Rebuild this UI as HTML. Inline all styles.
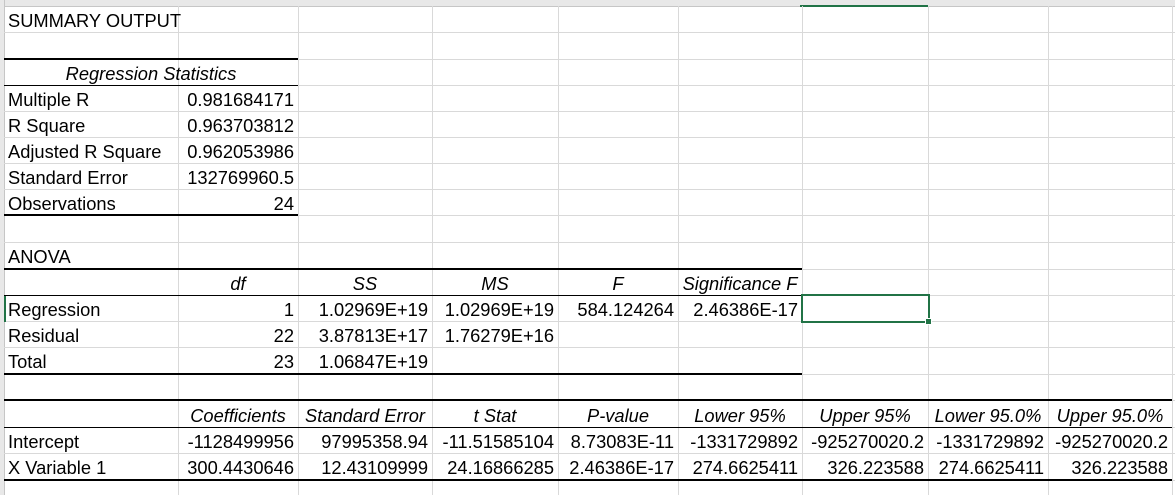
<!DOCTYPE html>
<html><head><meta charset="utf-8"><style>
body{margin:0;width:1175px;height:495px;overflow:hidden;background:#fff;font-family:"Liberation Sans",sans-serif;font-size:18.3px;color:#000;position:relative}
.vl{position:absolute;top:6px;bottom:0;width:1px;background:#d9d9d9}
.hl{position:absolute;left:4px;right:0;height:1px;background:#d9d9d9}
.b{position:absolute;background:#000}
.t{position:absolute;height:26px;line-height:29px;white-space:nowrap;letter-spacing:0}
.r{text-align:right}.c{text-align:center}.i{font-style:italic}
</style></head><body>
<div style="position:absolute;left:0;top:0;width:1175px;height:6px;background:#e8e8e8;border-bottom:1px solid #c6c6c6"></div>
<div style="position:absolute;left:0;top:0;width:4px;height:495px;background:#e8e8e8;border-right:1px solid #c6c6c6"></div>
<div style="position:absolute;left:800px;top:0;width:128px;height:5px;border-bottom:2px solid #217346"></div>
<div class="vl" style="left:178px"></div><div class="vl" style="left:298px"></div><div class="vl" style="left:432px"></div><div class="vl" style="left:558px"></div><div class="vl" style="left:678px"></div><div class="vl" style="left:802px"></div><div class="vl" style="left:928px"></div><div class="vl" style="left:1048px"></div><div class="vl" style="left:1172px"></div>
<div class="hl" style="top:32px"></div><div class="hl" style="top:59px"></div><div class="hl" style="top:85px"></div><div class="hl" style="top:111px"></div><div class="hl" style="top:137px"></div><div class="hl" style="top:163px"></div><div class="hl" style="top:189px"></div><div class="hl" style="top:215px"></div><div class="hl" style="top:242px"></div><div class="hl" style="top:269px"></div><div class="hl" style="top:295px"></div><div class="hl" style="top:321px"></div><div class="hl" style="top:347px"></div><div class="hl" style="top:374px"></div><div class="hl" style="top:400px"></div><div class="hl" style="top:427px"></div><div class="hl" style="top:453px"></div><div class="hl" style="top:480px"></div>
<div class="b" style="left:4px;width:294px;top:58px;height:2px"></div>
<div class="b" style="left:4px;width:294px;top:85px;height:1px"></div>
<div class="b" style="left:4px;width:294px;top:214px;height:2px"></div>
<div class="b" style="left:4px;width:798px;top:268px;height:2px"></div>
<div class="b" style="left:4px;width:798px;top:295px;height:1px"></div>
<div class="b" style="left:4px;width:798px;top:373px;height:2px"></div>
<div class="b" style="left:4px;width:1168px;top:399px;height:2px"></div>
<div class="b" style="left:4px;width:1168px;top:427px;height:1px"></div>
<div class="b" style="left:4px;width:1168px;top:479px;height:2px"></div>
<div style="position:absolute;left:801px;top:294px;width:125px;height:25px;border:2px solid #217346"></div>
<div style="position:absolute;left:925px;top:318px;width:5px;height:5px;background:#217346;border:1px solid #fff"></div>
<div style="position:absolute;left:4px;top:296px;width:2px;height:26px;background:#217346"></div>

<div class="t" style="left:8px;top:6px">SUMMARY OUTPUT</div>
<div class="t c i" style="left:4px;width:294px;top:59px">Regression Statistics</div>
<div class="t" style="left:8px;top:85px">Multiple R</div><div class="t r" style="left:178px;width:116px;top:85px">0.981684171</div>
<div class="t" style="left:8px;top:111px">R Square</div><div class="t r" style="left:178px;width:116px;top:111px">0.963703812</div>
<div class="t" style="left:8px;top:137px">Adjusted R Square</div><div class="t r" style="left:178px;width:116px;top:137px">0.962053986</div>
<div class="t" style="left:8px;top:163px">Standard Error</div><div class="t r" style="left:178px;width:116px;top:163px">132769960.5</div>
<div class="t" style="left:8px;top:189px">Observations</div><div class="t r" style="left:178px;width:116px;top:189px">24</div>

<div class="t" style="left:8px;top:242px">ANOVA</div>
<div class="t c i" style="left:178px;width:120px;top:269px">df</div>
<div class="t c i" style="left:298px;width:134px;top:269px">SS</div>
<div class="t c i" style="left:432px;width:126px;top:269px">MS</div>
<div class="t c i" style="left:558px;width:120px;top:269px">F</div>
<div class="t c i" style="left:678px;width:124px;top:269px">Significance F</div>
<div class="t" style="left:8px;top:295px">Regression</div><div class="t r" style="left:178px;width:116px;top:295px">1</div><div class="t r" style="left:298px;width:130px;top:295px">1.02969E+19</div><div class="t r" style="left:432px;width:122px;top:295px">1.02969E+19</div><div class="t r" style="left:558px;width:116px;top:295px">584.124264</div><div class="t r" style="left:678px;width:120px;top:295px">2.46386E-17</div>
<div class="t" style="left:8px;top:321px">Residual</div><div class="t r" style="left:178px;width:116px;top:321px">22</div><div class="t r" style="left:298px;width:130px;top:321px">3.87813E+17</div><div class="t r" style="left:432px;width:122px;top:321px">1.76279E+16</div>
<div class="t" style="left:8px;top:347px">Total</div><div class="t r" style="left:178px;width:116px;top:347px">23</div><div class="t r" style="left:298px;width:130px;top:347px">1.06847E+19</div>

<div class="t c i" style="left:178px;width:120px;top:401px">Coefficients</div>
<div class="t c i" style="left:298px;width:134px;top:401px">Standard Error</div>
<div class="t c i" style="left:432px;width:126px;top:401px">t Stat</div>
<div class="t c i" style="left:558px;width:120px;top:401px">P-value</div>
<div class="t c i" style="left:678px;width:124px;top:401px">Lower 95%</div>
<div class="t c i" style="left:802px;width:126px;top:401px">Upper 95%</div>
<div class="t c i" style="left:928px;width:120px;top:401px">Lower 95.0%</div>
<div class="t c i" style="left:1048px;width:124px;top:401px">Upper 95.0%</div>
<div class="t" style="left:8px;top:427px">Intercept</div><div class="t r" style="left:178px;width:116px;top:427px">-1128499956</div><div class="t r" style="left:298px;width:130px;top:427px">97995358.94</div><div class="t r" style="left:432px;width:122px;top:427px">-11.51585104</div><div class="t r" style="left:558px;width:116px;top:427px">8.73083E-11</div><div class="t r" style="left:678px;width:120px;top:427px">-1331729892</div><div class="t r" style="left:802px;width:122px;top:427px">-925270020.2</div><div class="t r" style="left:928px;width:116px;top:427px">-1331729892</div><div class="t r" style="left:1048px;width:120px;top:427px">-925270020.2</div>
<div class="t" style="left:8px;top:453px">X Variable 1</div><div class="t r" style="left:178px;width:116px;top:453px">300.4430646</div><div class="t r" style="left:298px;width:130px;top:453px">12.43109999</div><div class="t r" style="left:432px;width:122px;top:453px">24.16866285</div><div class="t r" style="left:558px;width:116px;top:453px">2.46386E-17</div><div class="t r" style="left:678px;width:120px;top:453px">274.6625411</div><div class="t r" style="left:802px;width:122px;top:453px">326.223588</div><div class="t r" style="left:928px;width:116px;top:453px">274.6625411</div><div class="t r" style="left:1048px;width:120px;top:453px">326.223588</div>
</body></html>
